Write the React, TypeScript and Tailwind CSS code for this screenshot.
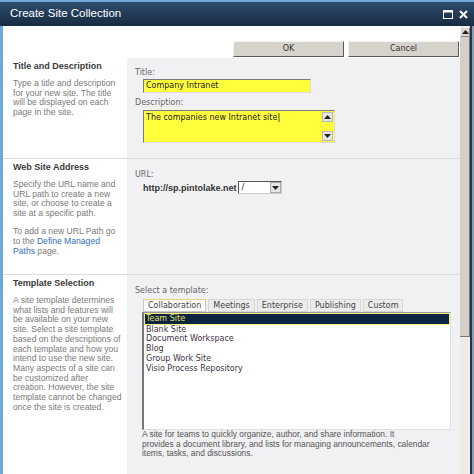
import React from 'react'

const sans = "font-['Liberation_Sans',Arial,sans-serif]"
const verd = "font-['DejaVu_Sans',Verdana,sans-serif]"

const ArrowUp = () => (
    <svg width="7" height="4" viewBox="0 0 7 4"><path d="M0 4 L3.5 0 L7 4 Z" fill="#222" /></svg>
)
const ArrowDown = () => (
    <svg width="7" height="4" viewBox="0 0 7 4"><path d="M0 0 L3.5 4 L7 0 Z" fill="#222" /></svg>
)

const LeftCol = ({ title, children }: { title: string; children: React.ReactNode }) => (
    <div className={`w-[124px] shrink-0 bg-white pl-[10px] pr-[7px] pt-[3px] ${sans}`}>
        <h2 className="text-[9px] leading-[11px] font-bold text-[#3a3a3a]">{title}</h2>
        <div className="mt-[7px] text-[8.6px] leading-[9.7px] text-[#7a7a7a]">{children}</div>
    </div>
)

const tabs = ['Collaboration', 'Meetings', 'Enterprise', 'Publishing', 'Custom']
const templates = ['Team Site', 'Blank Site', 'Document Workspace', 'Blog', 'Group Work Site', 'Visio Process Repository']

const templateHelp = [
    'A site template determines',
    'what lists and features will',
    'be available on your new',
    'site. Select a site template',
    'based on the descriptions of',
    'each template and how you',
    'intend to use the new site.',
    'Many aspects of a site can',
    'be customized after',
    'creation. However, the site',
    'template cannot be changed',
    'once the site is created.',
]

const templateDesc = [
    'A site for teams to quickly organize, author, and share information. It',
    'provides a document library, and lists for managing announcements, calendar',
    'items, tasks, and discussions.',
]

export default function App() {
    return (
        <div className="w-[474px] h-[474px] overflow-hidden bg-[#6ea9da] flex flex-col pt-[2px]">
            {/* Title bar */}
            <div className="h-[24px] shrink-0 flex items-center justify-between pl-[10px] pr-[6px] bg-gradient-to-b from-[#2e4d6e] to-[#172b42]">
                <span className={`text-white text-[11.5px] ${sans}`}>Create Site Collection</span>
                <div className="flex items-center gap-[6px]">
                    <svg width="10" height="9" viewBox="0 0 10 9">
                        <rect x="0.5" y="0.5" width="9" height="8" fill="none" stroke="#fff" />
                        <rect x="0" y="0" width="10" height="2.5" fill="#fff" />
                    </svg>
                    <svg width="9" height="9" viewBox="0 0 9 9">
                        <path d="M1 1 L8 8 M8 1 L1 8" stroke="#fff" strokeWidth="2" />
                    </svg>
                </div>
            </div>

            <div className="flex flex-1 min-h-0">
                {/* left window border */}
                <div className="w-[3px] shrink-0" />

                <div className="w-[457px] shrink-0 bg-white flex flex-col">
                    {/* Buttons */}
                    <div className="h-[32px] shrink-0 flex items-end justify-end gap-[4px] pb-px pr-px">
                        {['OK', 'Cancel'].map(b => (
                            <button key={b} className={`w-[111px] h-[16px] bg-[#d6d3cc] border border-t-[#f4f4f4] border-l-[#f4f4f4] border-r-[#5a5a5a] border-b-[#5a5a5a] text-[8px] text-[#333] ${verd}`}>{b}</button>
                        ))}
                    </div>

                    {/* Title and Description */}
                    <div className="flex h-[101px] shrink-0 border-b border-[#dedede]">
                        <LeftCol title="Title and Description">
                            <p>Type a title and description for your new site. The title will be displayed on each page in the site.</p>
                        </LeftCol>
                        <div className={`flex-1 bg-[#f1f1f3] pl-[8px] pt-[10px] text-[8px] leading-[10px] text-[#666] ${verd}`}>
                            <div>Title:</div>
                            <div className="ml-[8px] mt-px w-[168px] h-[14px] bg-[#ffff3c] border border-t-[#7b7b7b] border-l-[#7b7b7b] border-r-[#dcdcdc] border-b-[#dcdcdc] pl-[2px] text-[#222] leading-[12px]">Company Intranet</div>
                            <div className="mt-[5px]">Description:</div>
                            <div className="ml-[8px] mt-[2px] w-[192px] h-[33px] bg-[#ffff3c] border border-t-[#7b7b7b] border-l-[#7b7b7b] border-r-[#dcdcdc] border-b-[#dcdcdc] flex">
                                <div className="flex-1 pl-[2px] pt-[2px] text-[#222] leading-[10px]">The companies new Intranet site<span className="text-black">|</span></div>
                                <div className="w-[12px] flex flex-col justify-between py-px pr-px">
                                    <div className="h-[10px] bg-[#e6e6e6] border border-[#b8b8b8] flex items-center justify-center"><ArrowUp /></div>
                                    <div className="h-[10px] bg-[#e6e6e6] border border-[#b8b8b8] flex items-center justify-center"><ArrowDown /></div>
                                </div>
                            </div>
                        </div>
                    </div>

                    {/* Web Site Address */}
                    <div className="flex h-[116px] shrink-0 border-b border-[#dedede]">
                        <LeftCol title="Web Site Address">
                            <p>Specify the URL name and URL path to create a new site, or choose to create a site at a specific path.</p>
                            <p className="mt-[8.5px]">To add a new URL Path go<br />to the <span className="text-[#3570b8]">Define Managed</span><br /><span className="text-[#3570b8]">Paths</span> page.</p>
                        </LeftCol>
                        <div className={`flex-1 bg-[#f1f1f3] pl-[8px] pt-[11px] text-[8px] leading-[10px] text-[#666] ${verd}`}>
                            <div>URL:</div>
                            <div className="ml-[8px] mt-px flex items-center">
                                <span className={`text-[9px] font-bold text-[#333] ${sans}`}>http://sp.pintolake.net</span>
                                <div className="ml-px w-[44px] h-[13px] bg-white border border-t-[#555] border-l-[#555] border-r-[#ccc] border-b-[#ccc] flex">
                                    <span className="flex-1 pl-[3px] text-[#222] leading-[11px]">/</span>
                                    <div className="w-[11px] bg-[#e4e4e4] border border-[#aaa] flex items-center justify-center"><ArrowDown /></div>
                                </div>
                            </div>
                        </div>
                    </div>

                    {/* Template Selection */}
                    <div className="flex flex-1">
                        <LeftCol title="Template Selection">
                            {templateHelp.map(l => <div key={l} className="whitespace-nowrap">{l}</div>)}
                        </LeftCol>
                        <div className={`flex-1 bg-[#f1f1f3] pl-[8px] pt-[11px] text-[8px] leading-[10px] text-[#666] ${verd}`}>
                            <div>Select a template:</div>
                            <div className="ml-[8px] mt-[3px] flex gap-[2px] h-[13px]">
                                {tabs.map((t, i) => (
                                    <div key={t} className={`px-[4px] border leading-[11px] text-[#444] ${i === 0 ? 'bg-white border-[#c9c9c9] border-t-[#e8d48a]' : 'bg-[#ececec] border-[#d6d6d6]'}`}>{t}</div>
                                ))}
                            </div>
                            <div className="ml-[7px] w-[309px] h-[118px] bg-white border-l-2 border-t border-l-[#777] border-t-[#999] border-r border-b border-r-[#e0e0e0] border-b-[#e0e0e0] leading-[9.7px] text-[#3e3244]">
                                {templates.map((t, i) => (
                                    <div key={t} className={i === 0 ? 'bg-[#0d2440] text-[#e3e36a] border border-[#f2ef7a] pl-px' : 'pl-[2px]'}>{t}</div>
                                ))}
                            </div>
                            <div className={`ml-[7px] text-[8.4px] leading-[9.7px] text-[#555] ${sans}`}>
                                {templateDesc.map(l => <div key={l} className="whitespace-nowrap">{l}</div>)}
                            </div>
                        </div>
                    </div>
                </div>

                {/* Scrollbar */}
                <div className="w-[10px] shrink-0 flex flex-col bg-[#efebe7]">
                    <div className="mt-px h-[10px] bg-[#d8d4cc] border border-[#f6f6f6] border-r-[#888] border-b-[#888] flex items-center justify-center"><ArrowUp /></div>
                    <div className="h-[300px] bg-[#d4d0c8] border-r border-b border-[#777]" />
                </div>
                <div className="w-[2px] shrink-0 bg-[#1d3652]" />
                <div className="w-[2px] shrink-0 bg-[#8d9caa]" />
            </div>
        </div>
    )
}
